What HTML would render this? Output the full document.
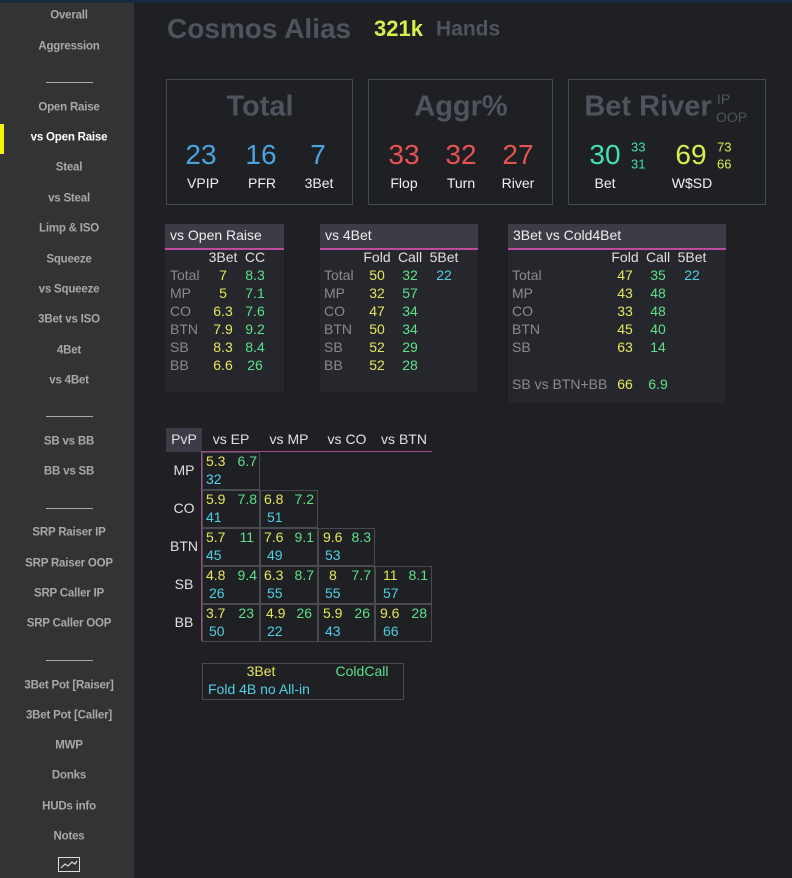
<!DOCTYPE html>
<html><head><meta charset="utf-8"><style>
*{margin:0;padding:0;box-sizing:border-box}
body{width:792px;height:878px;overflow:hidden;background:#1f2024;font-family:"Liberation Sans",sans-serif;position:relative;color:#ddd}
.top{position:absolute;left:0;top:0;width:792px;height:3px;background:#1a2a40}
.side{position:absolute;left:0;top:3px;width:134px;height:875px;background:#333333}
.c{position:absolute;transform:translate(-50%,-50%);white-space:nowrap;line-height:1}
.l{position:absolute;transform:translate(0,-50%);white-space:nowrap;line-height:1}
.r{position:absolute;transform:translate(-100%,-50%);white-space:nowrap;line-height:1}
.nav{font-size:11.5px;font-weight:bold;color:#a8a8a8;letter-spacing:-0.2px}
.hr{position:absolute;left:46px;width:47px;height:1px;background:#aaa}
.box{position:absolute;border:1px solid #474950}
.ttl{font-size:29px;font-weight:bold;color:#50535d}
.big{font-size:28px}
.lab{font-size:14px;color:#f0f0f0}
.tb{position:absolute;background:#26272c}
.th{position:absolute;background:#3b3c45;border-bottom:2px solid #c04aa0;font-size:14px;color:#eee;padding-left:5px;line-height:23px}
.t{font-size:14px}
.g{color:#8a8a8a}.w{color:#e0e0e0}
.y{color:#e6e65a}.gr{color:#5ce08a}.cy{color:#4fcfe6}
.cell{position:absolute;border:1px solid #4a4b50}
</style></head><body>
<div class="top"></div>
<div class="side"></div>
<div style="position:absolute;left:0;top:124px;width:4px;height:30px;background:#f5f500"></div>
<div class="c nav" style="left:69px;top:16px">Overall</div>
<div class="c nav" style="left:69px;top:47px">Aggression</div>
<div class="hr" style="top:82px"></div>
<div class="c nav" style="left:69px;top:108px">Open Raise</div>
<div class="c nav" style="left:69px;top:138px;color:#fff">vs Open Raise</div>
<div class="c nav" style="left:69px;top:168px">Steal</div>
<div class="c nav" style="left:69px;top:199px">vs Steal</div>
<div class="c nav" style="left:69px;top:229px">Limp &amp; ISO</div>
<div class="c nav" style="left:69px;top:260px">Squeeze</div>
<div class="c nav" style="left:69px;top:290px">vs Squeeze</div>
<div class="c nav" style="left:69px;top:320px">3Bet vs ISO</div>
<div class="c nav" style="left:69px;top:351px">4Bet</div>
<div class="c nav" style="left:69px;top:381px">vs 4Bet</div>
<div class="hr" style="top:416px"></div>
<div class="c nav" style="left:69px;top:442px">SB vs BB</div>
<div class="c nav" style="left:69px;top:472px">BB vs SB</div>
<div class="hr" style="top:508px"></div>
<div class="c nav" style="left:69px;top:533px">SRP Raiser IP</div>
<div class="c nav" style="left:69px;top:564px">SRP Raiser OOP</div>
<div class="c nav" style="left:69px;top:594px">SRP Caller IP</div>
<div class="c nav" style="left:69px;top:624px">SRP Caller OOP</div>
<div class="hr" style="top:660px"></div>
<div class="c nav" style="left:69px;top:686px">3Bet Pot [Raiser]</div>
<div class="c nav" style="left:69px;top:716px">3Bet Pot [Caller]</div>
<div class="c nav" style="left:69px;top:746px">MWP</div>
<div class="c nav" style="left:69px;top:776px">Donks</div>
<div class="c nav" style="left:69px;top:807px">HUDs info</div>
<div class="c nav" style="left:69px;top:837px">Notes</div>
<svg style="position:absolute;left:58px;top:857px" width="22" height="16" viewBox="0 0 22 16"><rect x="0.5" y="0.5" width="21" height="14" fill="none" stroke="#ddd"/><path d="M3 11 L7 7 L10 9 L14 5 L17 7 L19 4" fill="none" stroke="#ddd" stroke-width="1.2"/></svg>

<div class="l" style="left:167px;top:29px;font-size:28px;font-weight:bold;color:#50535d">Cosmos Alias</div>
<div class="l" style="left:374px;top:29px;font-size:22px;font-weight:bold;color:#d4f04a">321k</div>
<div class="l" style="left:436px;top:29px;font-size:21px;font-weight:bold;color:#50535d">Hands</div>

<div class="box" style="left:166px;top:79px;width:187px;height:126px"></div>
<div class="c ttl" style="left:260px;top:107px">Total</div>
<div class="c big" style="left:201px;top:155px;color:#4aa3e0">23</div>
<div class="c big" style="left:261px;top:155px;color:#4aa3e0">16</div>
<div class="c big" style="left:318px;top:155px;color:#4aa3e0">7</div>
<div class="c lab" style="left:203px;top:183px">VPIP</div>
<div class="c lab" style="left:262px;top:183px">PFR</div>
<div class="c lab" style="left:319px;top:183px">3Bet</div>

<div class="box" style="left:368px;top:79px;width:185px;height:126px"></div>
<div class="c ttl" style="left:461px;top:107px">Aggr%</div>
<div class="c big" style="left:404px;top:155px;color:#e55252">33</div>
<div class="c big" style="left:461px;top:155px;color:#e55252">32</div>
<div class="c big" style="left:518px;top:155px;color:#e55252">27</div>
<div class="c lab" style="left:404px;top:183px">Flop</div>
<div class="c lab" style="left:461px;top:183px">Turn</div>
<div class="c lab" style="left:518px;top:183px">River</div>

<div class="box" style="left:568px;top:79px;width:198px;height:126px"></div>
<div class="c ttl" style="left:648px;top:107px">Bet River</div>
<div class="l" style="left:717px;top:99px;font-size:14px;color:#50535d">IP</div>
<div class="l" style="left:716px;top:117px;font-size:14px;color:#50535d">OOP</div>
<div class="c big" style="left:605px;top:155px;color:#40e0b0">30</div>
<div class="l" style="left:631px;top:147px;font-size:13px;color:#40e0b0">33</div>
<div class="l" style="left:631px;top:164px;font-size:13px;color:#40e0b0">31</div>
<div class="c lab" style="left:605px;top:183px">Bet</div>
<div class="c big" style="left:691px;top:155px;color:#d4f04a">69</div>
<div class="l" style="left:717px;top:147px;font-size:13px;color:#d4f04a">73</div>
<div class="l" style="left:717px;top:164px;font-size:13px;color:#d4f04a">66</div>
<div class="c lab" style="left:692px;top:183px">W$SD</div>

<!-- vs Open Raise -->
<div class="tb" style="left:165px;top:224px;width:119px;height:168px"></div>
<div class="th" style="left:165px;top:224px;width:119px;height:26px">vs Open Raise</div>
<div class="c t w" style="left:223px;top:257px">3Bet</div><div class="c t w" style="left:255px;top:257px">CC</div>
<div class="l t g" style="left:170px;top:275px">Total</div><div class="c t y" style="left:223px;top:275px">7</div><div class="c t gr" style="left:255px;top:275px">8.3</div>
<div class="l t g" style="left:170px;top:293px">MP</div><div class="c t y" style="left:223px;top:293px">5</div><div class="c t gr" style="left:255px;top:293px">7.1</div>
<div class="l t g" style="left:170px;top:311px">CO</div><div class="c t y" style="left:223px;top:311px">6.3</div><div class="c t gr" style="left:255px;top:311px">7.6</div>
<div class="l t g" style="left:170px;top:329px">BTN</div><div class="c t y" style="left:223px;top:329px">7.9</div><div class="c t gr" style="left:255px;top:329px">9.2</div>
<div class="l t g" style="left:170px;top:347px">SB</div><div class="c t y" style="left:223px;top:347px">8.3</div><div class="c t gr" style="left:255px;top:347px">8.4</div>
<div class="l t g" style="left:170px;top:365px">BB</div><div class="c t y" style="left:223px;top:365px">6.6</div><div class="c t gr" style="left:255px;top:365px">26</div>

<!-- vs 4Bet -->
<div class="tb" style="left:320px;top:224px;width:158px;height:168px"></div>
<div class="th" style="left:320px;top:224px;width:158px;height:26px">vs 4Bet</div>
<div class="c t w" style="left:377px;top:257px">Fold</div><div class="c t w" style="left:410px;top:257px">Call</div><div class="c t w" style="left:444px;top:257px">5Bet</div>
<div class="l t g" style="left:324px;top:275px">Total</div><div class="c t y" style="left:377px;top:275px">50</div><div class="c t gr" style="left:410px;top:275px">32</div><div class="c t cy" style="left:444px;top:275px">22</div>
<div class="l t g" style="left:324px;top:293px">MP</div><div class="c t y" style="left:377px;top:293px">32</div><div class="c t gr" style="left:410px;top:293px">57</div>
<div class="l t g" style="left:324px;top:311px">CO</div><div class="c t y" style="left:377px;top:311px">47</div><div class="c t gr" style="left:410px;top:311px">34</div>
<div class="l t g" style="left:324px;top:329px">BTN</div><div class="c t y" style="left:377px;top:329px">50</div><div class="c t gr" style="left:410px;top:329px">34</div>
<div class="l t g" style="left:324px;top:347px">SB</div><div class="c t y" style="left:377px;top:347px">52</div><div class="c t gr" style="left:410px;top:347px">29</div>
<div class="l t g" style="left:324px;top:365px">BB</div><div class="c t y" style="left:377px;top:365px">52</div><div class="c t gr" style="left:410px;top:365px">28</div>

<!-- 3Bet vs Cold4Bet -->
<div class="tb" style="left:508px;top:224px;width:218px;height:179px"></div>
<div class="th" style="left:508px;top:224px;width:218px;height:26px">3Bet vs Cold4Bet</div>
<div class="c t w" style="left:625px;top:257px">Fold</div><div class="c t w" style="left:658px;top:257px">Call</div><div class="c t w" style="left:692px;top:257px">5Bet</div>
<div class="l t g" style="left:512px;top:275px">Total</div><div class="c t y" style="left:625px;top:275px">47</div><div class="c t gr" style="left:658px;top:275px">35</div><div class="c t cy" style="left:692px;top:275px">22</div>
<div class="l t g" style="left:512px;top:293px">MP</div><div class="c t y" style="left:625px;top:293px">43</div><div class="c t gr" style="left:658px;top:293px">48</div>
<div class="l t g" style="left:512px;top:311px">CO</div><div class="c t y" style="left:625px;top:311px">33</div><div class="c t gr" style="left:658px;top:311px">48</div>
<div class="l t g" style="left:512px;top:329px">BTN</div><div class="c t y" style="left:625px;top:329px">45</div><div class="c t gr" style="left:658px;top:329px">40</div>
<div class="l t g" style="left:512px;top:347px">SB</div><div class="c t y" style="left:625px;top:347px">63</div><div class="c t gr" style="left:658px;top:347px">14</div>
<div class="l t g" style="left:512px;top:384px">SB vs BTN+BB</div><div class="c t y" style="left:625px;top:384px">66</div><div class="c t gr" style="left:658px;top:384px">6.9</div>

<!-- PvP -->
<div style="position:absolute;left:166px;top:428px;width:36px;height:24px;background:#3b3c45"></div>
<div class="c t w" style="left:184px;top:439px">PvP</div>
<div class="c t w" style="left:231px;top:439px">vs EP</div>
<div class="c t w" style="left:289px;top:439px">vs MP</div>
<div class="c t w" style="left:347px;top:439px">vs CO</div>
<div class="c t w" style="left:404px;top:439px">vs BTN</div>
<div style="position:absolute;left:201px;top:451px;width:231px;height:1px;background:#a04a90"></div>
<div style="position:absolute;left:201px;top:451px;width:1px;height:190px;background:#a04a90"></div>
<div class="c t w" style="left:184px;top:470px">MP</div>
<div class="c t w" style="left:184px;top:508px">CO</div>
<div class="c t w" style="left:184px;top:546px">BTN</div>
<div class="c t w" style="left:184px;top:584px">SB</div>
<div class="c t w" style="left:184px;top:622px">BB</div>

<div class="cell" style="left:202px;top:452px;width:58px;height:38px"></div>
<div class="l t y" style="left:206px;top:461px">5.3</div><div class="r t gr" style="left:257px;top:461px">6.7</div><div class="l t cy" style="left:206px;top:479px">32</div>

<div class="cell" style="left:202px;top:490px;width:58px;height:38px"></div>
<div class="l t y" style="left:206px;top:499px">5.9</div><div class="r t gr" style="left:257px;top:499px">7.8</div><div class="l t cy" style="left:206px;top:517px">41</div>
<div class="cell" style="left:260px;top:490px;width:58px;height:38px"></div>
<div class="l t y" style="left:264px;top:499px">6.8</div><div class="r t gr" style="left:314px;top:499px">7.2</div><div class="l t cy" style="left:267px;top:517px">51</div>

<div class="cell" style="left:202px;top:528px;width:58px;height:38px"></div>
<div class="l t y" style="left:206px;top:537px">5.7</div><div class="r t gr" style="left:254px;top:537px">11</div><div class="l t cy" style="left:206px;top:555px">45</div>
<div class="cell" style="left:260px;top:528px;width:58px;height:38px"></div>
<div class="l t y" style="left:264px;top:537px">7.6</div><div class="r t gr" style="left:314px;top:537px">9.1</div><div class="l t cy" style="left:267px;top:555px">49</div>
<div class="cell" style="left:318px;top:528px;width:57px;height:38px"></div>
<div class="l t y" style="left:323px;top:537px">9.6</div><div class="r t gr" style="left:371px;top:537px">8.3</div><div class="l t cy" style="left:325px;top:555px">53</div>

<div class="cell" style="left:202px;top:566px;width:58px;height:38px"></div>
<div class="l t y" style="left:206px;top:575px">4.8</div><div class="r t gr" style="left:257px;top:575px">9.4</div><div class="l t cy" style="left:209px;top:593px">26</div>
<div class="cell" style="left:260px;top:566px;width:58px;height:38px"></div>
<div class="l t y" style="left:264px;top:575px">6.3</div><div class="r t gr" style="left:314px;top:575px">8.7</div><div class="l t cy" style="left:267px;top:593px">55</div>
<div class="cell" style="left:318px;top:566px;width:57px;height:38px"></div>
<div class="l t y" style="left:329px;top:575px">8</div><div class="r t gr" style="left:371px;top:575px">7.7</div><div class="l t cy" style="left:325px;top:593px">55</div>
<div class="cell" style="left:375px;top:566px;width:57px;height:38px"></div>
<div class="l t y" style="left:383px;top:575px">11</div><div class="r t gr" style="left:428px;top:575px">8.1</div><div class="l t cy" style="left:383px;top:593px">57</div>

<div class="cell" style="left:202px;top:604px;width:58px;height:38px"></div>
<div class="l t y" style="left:206px;top:613px">3.7</div><div class="r t gr" style="left:254px;top:613px">23</div><div class="l t cy" style="left:209px;top:631px">50</div>
<div class="cell" style="left:260px;top:604px;width:58px;height:38px"></div>
<div class="l t y" style="left:266px;top:613px">4.9</div><div class="r t gr" style="left:312px;top:613px">26</div><div class="l t cy" style="left:267px;top:631px">22</div>
<div class="cell" style="left:318px;top:604px;width:57px;height:38px"></div>
<div class="l t y" style="left:323px;top:613px">5.9</div><div class="r t gr" style="left:370px;top:613px">26</div><div class="l t cy" style="left:325px;top:631px">43</div>
<div class="cell" style="left:375px;top:604px;width:57px;height:38px"></div>
<div class="l t y" style="left:380px;top:613px">9.6</div><div class="r t gr" style="left:427px;top:613px">28</div><div class="l t cy" style="left:383px;top:631px">66</div>

<div class="cell" style="left:202px;top:663px;width:202px;height:37px"></div>
<div class="c t y" style="left:261px;top:671px">3Bet</div>
<div class="c t gr" style="left:362px;top:671px">ColdCall</div>
<div class="l t cy" style="left:208px;top:689px">Fold 4B no All-in</div>
</body></html>
